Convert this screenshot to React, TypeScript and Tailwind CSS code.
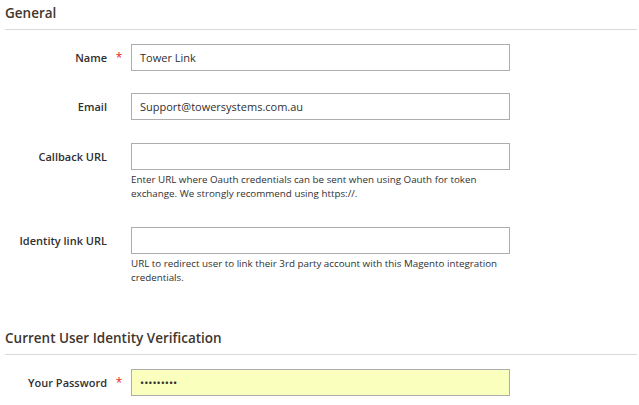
import React from 'react';

interface FieldProps {
    label: string;
    required?: boolean;
    value?: string;
    type?: string;
    note?: string;
    autofill?: boolean;
    className?: string;
}

function Field({ label, required, value = '', type = 'text', note, autofill, className = '' }: FieldProps) {
    return (
        <div className={className}>
            <div className="flex items-center">
                <label className="w-[107px] text-right text-[11px] font-semibold text-[#303030] leading-[16px]">
                    {label}
                </label>
                <span className="w-[24px] text-center text-[12px] text-[#e22626] leading-[16px]">
                    {required ? '*' : ''}
                </span>
                <input
                    type={type}
                    readOnly
                    defaultValue={value}
                    className={`w-[379px] h-[27px] border border-[#adadad] pl-[8px] text-[11px] text-[#303030] outline-none ${
                        autofill ? 'bg-[#faffbd]' : 'bg-white'
                    }`}
                />
            </div>
            {note && (
                <p className="ml-[131px] mt-[3px] w-[379px] text-[9.8px] leading-[14px] text-[#303030]">{note}</p>
            )}
        </div>
    );
}

function Legend({ title, className = '' }: { title: string; className?: string }) {
    return (
        <div className={`ml-[5px] mr-[2px] pt-[3px] pb-[6px] border-b border-[#dcd9d5] ${className}`}>
            <h2 className="text-[13.5px] font-semibold leading-[20px] text-[#41362f]">{title}</h2>
        </div>
    );
}

export default function App() {
    return (
        <div className="w-[639px] h-[405px] bg-white overflow-hidden" style={{ fontFamily: '"Open Sans", sans-serif' }}>
            <Legend title="General" />
            <Field className="mt-[14px]" label="Name" required value="Tower Link" />
            <Field className="mt-[22px]" label="Email" value="Support@towersystems.com.au" />
            <Field
                className="mt-[23px]"
                label="Callback URL"
                note="Enter URL where Oauth credentials can be sent when using Oauth for token exchange. We strongly recommend using https://."
            />
            <Field
                className="mt-[26px]"
                label="Identity link URL"
                note="URL to redirect user to link their 3rd party account with this Magento integration credentials."
            />
            <Legend className="mt-[40px]" title="Current User Identity Verification" />
            <Field className="mt-[14px]" label="Your Password" required type="password" value="123456789" autofill />
        </div>
    );
}
